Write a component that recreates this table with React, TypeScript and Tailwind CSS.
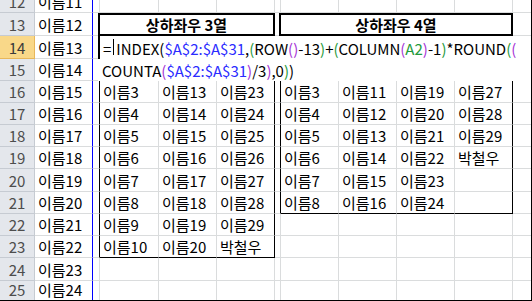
import React from 'react';

const FONT = { fontFamily: '"Noto Sans CJK KR", "Noto Sans", sans-serif' };

// column widths incl. right gridline: header, A, B, C, D, E, F, G, H, I, J, K
const colW = ['w-[35px]', 'w-[58px]', 'w-[7px]', 'w-[59px]', 'w-[58px]', 'w-[58px]', 'w-[6px]', 'w-[58px]', 'w-[58px]', 'w-[58px]', 'w-[58px]', 'w-[18px]'];

const rowH: Record<number, string> = {
  12: 'h-[13px]',
  13: 'h-[23px]',
  14: 'h-[23px]',
  15: 'h-[22px]',
  16: 'h-[22px]',
  17: 'h-[22px]',
  18: 'h-[22px]',
  19: 'h-[22px]',
  20: 'h-[23px]',
  21: 'h-[22px]',
  22: 'h-[22px]',
  23: 'h-[22px]',
  24: 'h-[23px]',
  25: 'h-[19px]',
};

const names: Record<number, string[]> = {
  12: ['이름11'],
  14: ['이름13'],
  15: ['이름14'],
  16: ['이름15', '', '이름3', '이름13', '이름23', '', '이름3', '이름11', '이름19', '이름27'],
  17: ['이름16', '', '이름4', '이름14', '이름24', '', '이름4', '이름12', '이름20', '이름28'],
  18: ['이름17', '', '이름5', '이름15', '이름25', '', '이름5', '이름13', '이름21', '이름29'],
  19: ['이름18', '', '이름6', '이름16', '이름26', '', '이름6', '이름14', '이름22', '박철우'],
  20: ['이름19', '', '이름7', '이름17', '이름27', '', '이름7', '이름15', '이름23'],
  21: ['이름20', '', '이름8', '이름18', '이름28', '', '이름8', '이름16', '이름24'],
  22: ['이름21', '', '이름9', '이름19', '이름29'],
  23: ['이름22', '', '이름10', '이름20', '박철우'],
  24: ['이름23'],
  25: ['이름24'],
};

const rightClass = (r: number, c: number) => {
  if (c === 11) return 'border-r-0';
  if (c === 1) return 'border-r-[#0000ff]';
  if ((c === 2 || c === 5) && r >= 14 && r <= 23) return 'border-r-black';
  if ((c === 6 || c === 10) && r >= 14 && r <= 21) return 'border-r-black';
  return 'border-r-[#dadcdd]';
};

const bottomClass = (r: number, c: number) => {
  if (r === 25) return 'border-b-0';
  if (c >= 3 && c <= 5 && r === 23) return 'border-b-black';
  if (c >= 7 && c <= 10 && r === 21) return 'border-b-black';
  return 'border-b-[#dadcdd]';
};

const RowHeader = ({ r }: { r: number }) => (
  <div
    className={`${colW[0]} h-full shrink-0 flex items-end justify-center overflow-hidden border-r border-b ${
      r === 14
        ? 'bg-[#f9d889] border-b-[#e8b75a] border-r-[#e8b75a] text-[#3a3a3a]'
        : 'bg-[#e4e7ec] border-b-[#c6cbd2] border-r-[#c6cbd2] text-[#4d4d4d]'
    } ${r === 25 ? 'border-b-0' : ''}`}
  >
    <span className="pb-[2px] text-[15px] leading-[17px]">{r}</span>
  </div>
);

const Cell = ({ r, c, text }: { r: number; c: number; text?: string }) => (
  <div
    className={`${colW[c]} h-full shrink-0 flex items-end overflow-hidden border-r border-b ${rightClass(r, c)} ${bottomClass(r, c)}`}
  >
    {text ? <span className="pl-[3px] pb-[2px] whitespace-nowrap text-[15px] leading-[17px] text-black">{text}</span> : null}
  </div>
);

const HeaderRow = () => (
  <div className={`flex ${rowH[13]}`}>
    <RowHeader r={13} />
    <Cell r={13} c={1} text="이름12" />
    <div className="w-[5px] h-full shrink-0 border-b border-b-[#dadcdd]" />
    <div className="w-[177px] h-full shrink-0 border-2 border-black flex items-end justify-center">
      <span className="pb-[1px] text-[15px] leading-[17px] font-bold text-black">상하좌우 3열</span>
    </div>
    <div className="w-[4px] h-full shrink-0 border-b border-b-[#dadcdd]" />
    <div className="w-[234px] h-full shrink-0 border-2 border-black flex items-end justify-center">
      <span className="pb-[1px] text-[15px] leading-[17px] font-bold text-black">상하좌우 4열</span>
    </div>
    <div className="w-[18px] h-full shrink-0 border-b border-b-[#dadcdd]" />
  </div>
);

const G = 'text-[#1f9a3c]';
const P = 'text-[#a534d6]';
const B = 'text-[#2b2bff]';

const FormulaEditor = () => (
  <div className="absolute left-[98px] top-[36px] w-[433px] h-[45px] bg-white text-[15px] text-black whitespace-nowrap">
    <div className="h-[23px] flex items-end border-l-2 border-black pl-[3px] pb-[2px] leading-[17px]">
      <span>=</span>
      <span className="inline-block w-px h-[16px] bg-black mx-[2px] self-center" />
      <span>INDEX(</span>
      <span className={B}>$A$2:$A$31</span>
      <span>,</span>
      <span className={G}>(</span>
      <span>ROW</span>
      <span className={P}>()</span>
      <span>-13</span>
      <span className={G}>)</span>
      <span>+</span>
      <span className={G}>(</span>
      <span>COLUMN</span>
      <span className={P}>(</span>
      <span className={G}>A2</span>
      <span className={P}>)</span>
      <span>-1</span>
      <span className={G}>)</span>
      <span>*ROUND</span>
      <span className={G}>(</span>
      <span className={P}>(</span>
    </div>
    <div className="h-[22px] flex items-end pl-[4px] pb-[2px] leading-[17px]">
      <span>COUNTA</span>
      <span className={P}>(</span>
      <span className={B}>$A$2:$A$31</span>
      <span className={P}>)</span>
      <span>/3</span>
      <span className={P}>)</span>
      <span>,0</span>
      <span className={G}>)</span>
      <span>)</span>
    </div>
  </div>
);

export default function App() {
  const rows = [12, 14, 15, 16, 17, 18, 19, 20, 21, 22, 23, 24, 25];
  return (
    <div className="w-[532px] h-[301px] bg-white overflow-hidden" style={FONT}>
      <div className="relative w-[532px] h-[301px] border-r border-b border-black overflow-hidden">
        {rows.map((r) => (
          <React.Fragment key={r}>
            {r === 14 ? <HeaderRow /> : null}
            <div className={`flex ${rowH[r]}`}>
              <RowHeader r={r} />
              {colW.slice(1).map((_, i) => (
                <Cell key={i} r={r} c={i + 1} text={names[r]?.[i]} />
              ))}
            </div>
          </React.Fragment>
        ))}
        <FormulaEditor />
      </div>
    </div>
  );
}
